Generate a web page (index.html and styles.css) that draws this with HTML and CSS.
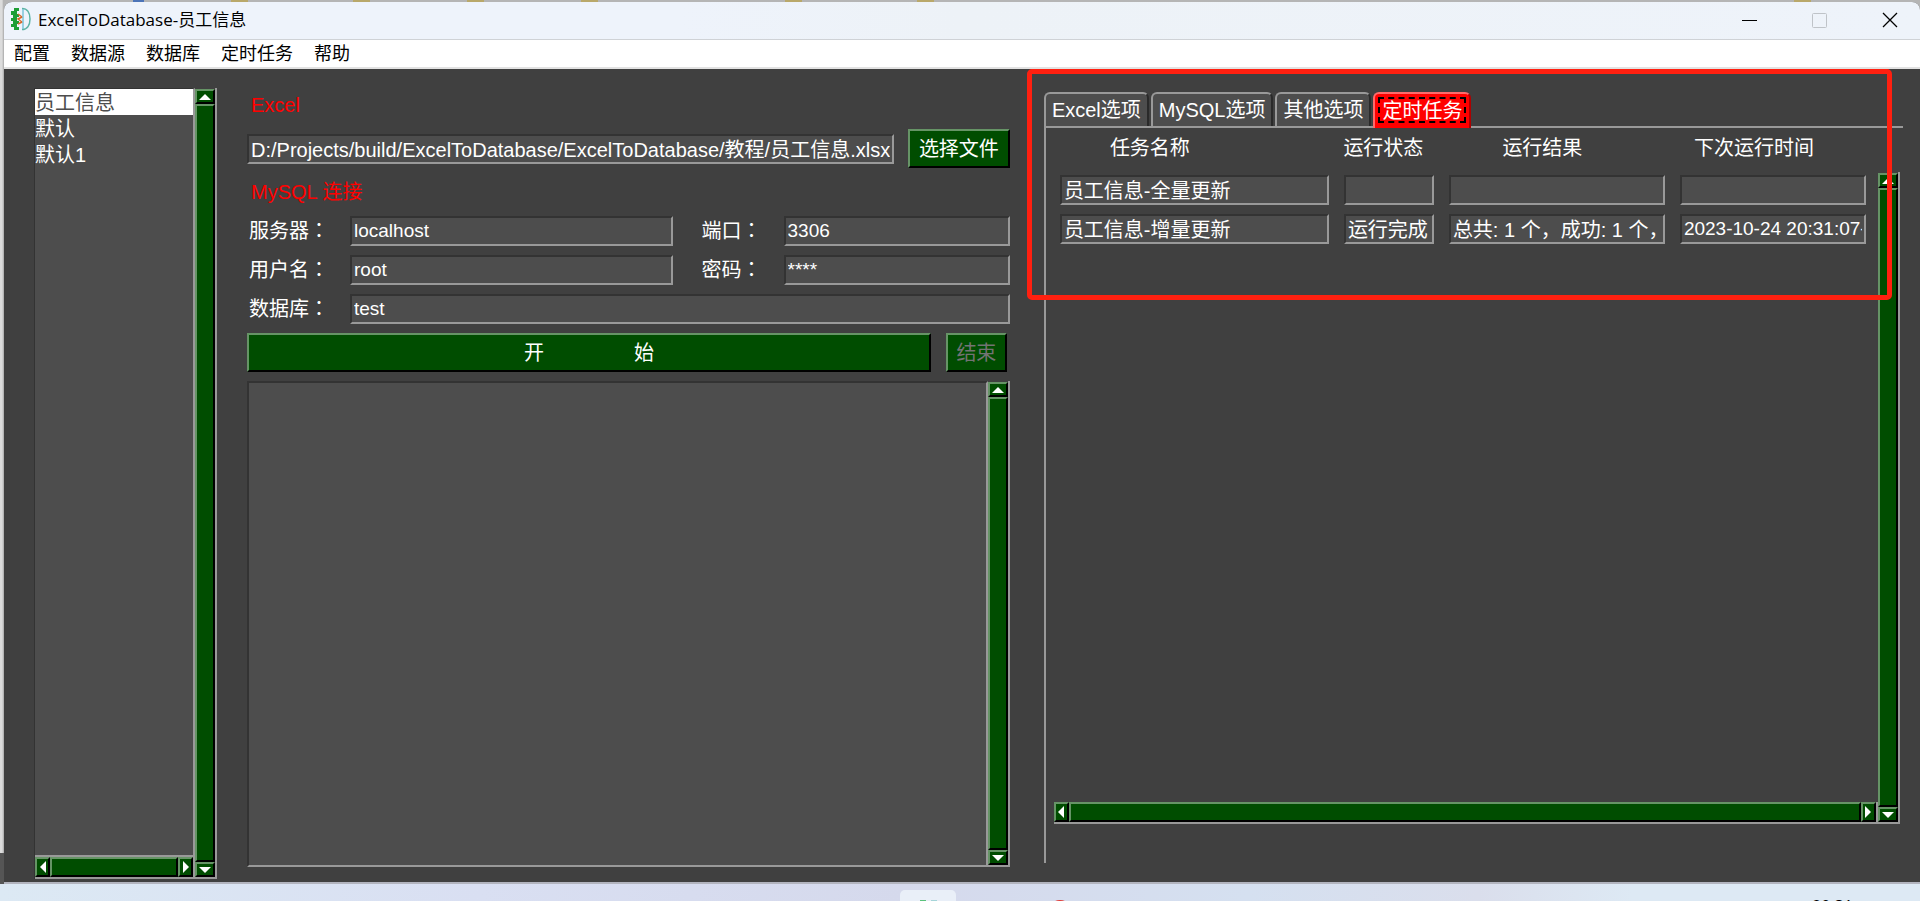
FILE: index.html
```html
<!DOCTYPE html>
<html lang="zh-CN">
<head>
<meta charset="UTF-8">
<meta name="viewport" content="width=device-width, initial-scale=1.0">
<title>ExcelToDatabase-员工信息</title>
<link rel="stylesheet" href="styles.css">
</head>
<body>
<div class="window">
  <header class="titlebar">
    <svg class="logo" width="20" height="24" viewBox="0 0 20 24" fill="none">
      <path d="M3 1h5v3H6v3h2v3H6v4h2v3H6v3h2v3H3v-3H0v-3h2v-3H0v-3h2V8H0V4h3z" fill="#1d9e35"/>
      <path d="M7 7l4 3-4 2 4 3-4 2" stroke="#d9692a" stroke-width="1.500"/>
      <path d="M11 1.500c5 0 8 4 8 10.500s-3 10.500-8 10.500" stroke="#5cb3a4" stroke-width="1.500"/>
      <path d="M12 2v20" stroke="#7cc4d8" stroke-width="1.500"/>
    </svg>
    <h1>ExcelToDatabase-员工信息</h1>
    <div class="window-buttons">
      <button type="button" aria-label="最小化"><svg width="16" height="16" viewBox="0 0 16 16"><path d="M0 8.500h15" stroke="#000"/></svg></button>
      <button type="button" aria-label="最大化" disabled><svg width="16" height="16" viewBox="0 0 16 16"><rect x="0.500" y="1.500" width="14" height="14" rx="1" fill="none" stroke="#bfc3c8"/></svg></button>
      <button type="button" aria-label="关闭"><svg width="16" height="16" viewBox="0 0 16 16"><path d="M1 1l14 14M15 1L1 15" stroke="#000" stroke-width="1.300"/></svg></button>
    </div>
  </header>

  <nav class="menu">
    <a href="#">配置</a>
    <a href="#">数据源</a>
    <a href="#">数据库</a>
    <a href="#">定时任务</a>
    <a href="#">帮助</a>
  </nav>

  <main>
    <section class="configs">
      <select size="10" aria-label="配置">
        <option selected>员工信息</option>
        <option>默认</option>
        <option>默认1</option>
      </select>
      <div class="scroll vertical">
        <button type="button" aria-label="上"><svg width="12" height="6"><path d="M0 6l6-6 6 6z"/></svg></button>
        <div class="thumb"></div>
        <button type="button" aria-label="下"><svg width="12" height="6"><path d="M0 0h12l-6 6z"/></svg></button>
      </div>
      <div class="scroll horizontal">
        <button type="button" aria-label="左"><svg width="6" height="12"><path d="M6 0v12L0 6z"/></svg></button>
        <div class="thumb"></div>
        <button type="button" aria-label="右"><svg width="6" height="12"><path d="M0 0l6 6-6 6z"/></svg></button>
      </div>
    </section>

    <form class="connection">
      <label class="group-title" for="file">Excel</label>
      <div class="file-row">
        <input type="text" id="file" value="D:/Projects/build/ExcelToDatabase/ExcelToDatabase/教程/员工信息.xlsx">
        <button type="button" class="btn">选择文件</button>
      </div>
      <h2 class="group-title">MySQL 连接</h2>
      <div class="fields">
        <label for="host">服务器<span class="colon" lang="zh-TW">：</span></label>
        <input type="text" id="host" value="localhost">
        <label class="second" for="port">端口<span class="colon" lang="zh-TW">：</span></label>
        <input type="text" id="port" value="3306">
        <label for="user">用户名<span class="colon" lang="zh-TW">：</span></label>
        <input type="text" id="user" value="root">
        <label class="second" for="password">密码<span class="colon" lang="zh-TW">：</span></label>
        <input type="text" id="password" value="****">
        <label for="database">数据库<span class="colon" lang="zh-TW">：</span></label>
        <input type="text" id="database" class="wide" value="test">
      </div>
      <div class="run-row">
        <button type="button" class="btn start"><span>开</span><span>始</span></button>
        <button type="button" class="btn stop" disabled>结束</button>
      </div>
      <div class="log">
        <textarea aria-label="日志"></textarea>
        <div class="scroll vertical">
          <button type="button" aria-label="上"><svg width="12" height="6"><path d="M0 6l6-6 6 6z"/></svg></button>
          <div class="thumb"></div>
          <button type="button" aria-label="下"><svg width="12" height="6"><path d="M0 0h12l-6 6z"/></svg></button>
        </div>
      </div>
    </form>

    <section class="options">
      <div class="tabs">
        <button type="button">Excel选项</button>
        <button type="button">MySQL选项</button>
        <button type="button">其他选项</button>
        <button type="button" class="active">定时任务</button>
      </div>
      <div class="panel">
        <table>
          <thead>
            <tr>
              <th class="name">任务名称</th>
              <th class="status">运行状态</th>
              <th class="result">运行结果</th>
              <th class="next">下次运行时间</th>
            </tr>
          </thead>
          <tbody>
            <tr>
              <td><input type="text" aria-label="任务名称" value="员工信息-全量更新"></td>
              <td><input type="text" aria-label="运行状态"></td>
              <td><input type="text" aria-label="运行结果"></td>
              <td><input type="text" class="date" aria-label="下次运行时间"></td>
            </tr>
            <tr>
              <td><input type="text" aria-label="任务名称" value="员工信息-增量更新"></td>
              <td><input type="text" aria-label="运行状态" value="运行完成"></td>
              <td><input type="text" aria-label="运行结果" value="总共: 1 个，成功: 1 个，"></td>
              <td><input type="text" class="date" aria-label="下次运行时间" value="2023-10-24 20:31:07-"></td>
            </tr>
          </tbody>
        </table>
        <div class="scroll vertical">
          <button type="button" aria-label="上"><svg width="12" height="6"><path d="M0 6l6-6 6 6z"/></svg></button>
          <div class="thumb"></div>
          <button type="button" aria-label="下"><svg width="12" height="6"><path d="M0 0h12l-6 6z"/></svg></button>
        </div>
        <div class="scroll horizontal">
          <button type="button" aria-label="左"><svg width="6" height="12"><path d="M6 0v12L0 6z"/></svg></button>
          <div class="thumb"></div>
          <button type="button" aria-label="右"><svg width="6" height="12"><path d="M0 0l6 6-6 6z"/></svg></button>
        </div>
      </div>
      <div class="highlight"></div>
    </section>
  </main>
</div>

<footer class="taskbar">
  <div class="task"><i class="green"></i><i class="teal"></i></div>
  <i class="red-icon"></i>
  <time>20:31</time>
</footer>
</body>
</html>
```
FILE: styles.css
```css
* {
  box-sizing: border-box;
}

body {
  margin: 0;
  height: 100vh;
  display: flex;
  flex-direction: column;
  overflow: hidden;
  padding: 2px 0 0 4px;
  font-family: "Liberation Sans", "Noto Sans CJK SC", sans-serif;
  font-size: 20px;
  color: #fff;
  /* desktop showing around the window */
  background:
    linear-gradient(#b9a86a, #b9a86a) 231px 0 / 17px 2px no-repeat,
    linear-gradient(#b9a86a, #b9a86a) 353px 0 / 17px 2px no-repeat,
    linear-gradient(#b9a86a, #b9a86a) 467px 0 / 17px 2px no-repeat,
    linear-gradient(#b9a86a, #b9a86a) 581px 0 / 17px 2px no-repeat,
    linear-gradient(#b9a86a, #b9a86a) 785px 0 / 17px 2px no-repeat,
    linear-gradient(#b9a86a, #b9a86a) 917px 0 / 17px 2px no-repeat,
    linear-gradient(#b9a86a, #b9a86a) 1794px 0 / 17px 2px no-repeat,
    linear-gradient(#4c74b8, #4c74b8) 133px 0 / 11px 2px no-repeat,
    linear-gradient(#555, #555) 0 853px / 4px 31px no-repeat,
    linear-gradient(90deg, #dcdcdc 2px, #a8a8a8 4px) 0 0 / 4px 100% no-repeat,
    #b5b5b5;
}

button,
input,
select,
textarea {
  font: inherit;
  color: inherit;
  margin: 0;
  padding: 0;
  border: 0;
  border-radius: 0;
  outline: none;
}

.window {
  flex: 1;
  min-height: 0;
  display: flex;
  flex-direction: column;
  background: #404040;
  border-bottom: 2px solid #b2b4be;
  border-radius: 8px 8px 0 0;
  overflow: hidden;
}

/* title bar */
.titlebar {
  display: flex;
  align-items: center;
  height: 38px;
  flex: none;
  padding-left: 7px;
  background: linear-gradient(90deg, #eef3fb 35%, #edf2f7 50%, #eef3fa);
  border-bottom: 1px solid #cfd2d6;
  color: #000;
}

.logo {
  margin-bottom: 4px;
}

.titlebar h1 {
  margin: 0 0 4px 7px;
  flex: 1;
  font-family: "Open Sans", "Noto Sans CJK SC", sans-serif;
  font-size: 17px;
  font-weight: 400;
}

.window-buttons {
  display: flex;
  margin-bottom: 2px;
}

.window-buttons button {
  width: 70px;
  height: 36px;
  display: flex;
  align-items: center;
  justify-content: center;
  background: none;
}

.window-buttons button:last-child {
  width: 60px;
  margin-left: 5px;
}

.menu {
  display: flex;
  align-items: center;
  gap: 21px;
  height: 29px;
  flex: none;
  padding-left: 10px;
  background: #fff;
  border-bottom: 2px solid #e2e2e2;
}

.menu a {
  color: #000;
  font-size: 18px;
  line-height: 26px;
  text-decoration: none;
}

main {
  flex: 1;
  min-height: 0;
  display: grid;
  grid-template-columns: 183px minmax(0, 763fr) minmax(0, 859fr);
  column-gap: 30px;
  padding: 19px 17px 3px 30px;
}

/* sunken text boxes */
input,
textarea {
  width: 100%;
  min-width: 0;
  height: 30px;
  padding: 0 2px;
  background: #4d4d4d;
  border: 2px solid;
  border-color: #333 #999 #999 #333;
}

/* raised green buttons */
.btn,
.scroll button,
.thumb {
  background: #004d00;
  border: 2px solid;
  border-color: #669466 #000 #000 #669466;
}

.btn {
  height: 39px;
  line-height: 32px;
}

/* scroll bars */
.scroll {
  display: flex;
  border: solid #999;
  border-width: 0 2px 2px 0;
}

.scroll.vertical {
  flex-direction: column;
  width: 22px;
  padding-top: 1px;
}

.scroll.horizontal {
  height: 22px;
}

.thumb {
  flex: 1;
}

.scroll button {
  width: 15px;
  flex: none;
  display: flex;
  align-items: center;
  justify-content: center;
}

.scroll.vertical button {
  width: auto;
  height: 15px;
}

.scroll svg {
  fill: #fff;
}

/* saved configurations */
.configs {
  display: grid;
  grid-template-columns: 1fr 22px;
  grid-template-rows: 1fr 22px;
  border-left: 1px solid #333;
}

.configs select {
  width: 100%;
  height: 100%;
  background: #4d4d4d;
  border: solid #999;
  border-width: 0 2px 2px 0;
  border-top: 1px solid #333;
  overflow: hidden;
}

.configs option {
  display: flex;
  align-items: center;
  padding: 0 0 2px;
  height: 26px;
  min-height: 0;
  color: #fff;
}

.configs option:checked {
  background: #fff linear-gradient(#fff, #fff);
  color: #4d4d4d;
  -webkit-text-fill-color: #4d4d4d;
}

.configs .vertical {
  grid-column: 2;
  grid-row: 1 / 3;
}

/* connection form */
.connection {
  display: flex;
  flex-direction: column;
  padding: 0 2px 12px 0;
  min-height: 0;
}

.group-title {
  margin: 0;
  padding-left: 4px;
  height: 35px;
  line-height: 35px;
  font-size: 20px;
  font-weight: 400;
  color: #f00;
}

.file-row {
  display: flex;
  align-items: center;
  gap: 14px;
  padding-top: 6px;
}

.file-row .btn {
  width: 102px;
  flex: none;
}

h2.group-title {
  height: 48px;
  line-height: 48px;
}

.fields {
  display: grid;
  grid-template-columns: 103px 322fr 111px 226fr;
  gap: 9px 0;
  align-items: center;
}

.fields label {
  height: 30px;
  padding-left: 2px;
  line-height: 30px;
}

/* the Taiwan form centres the full-width colon */
.colon {
  font-family: "Noto Sans CJK TC", sans-serif;
  line-height: 20px;
}

.fields .second {
  padding-left: 29px;
}

.fields input,
.date {
  font-size: 19px;
}

.fields .wide {
  grid-column: 2 / 5;
}

.run-row {
  display: flex;
  gap: 15px;
  margin: 9px 3px 9px 0;
}

.start {
  flex: 1;
  display: flex;
  align-items: center;
  justify-content: center;
  gap: 90px;
}

.stop {
  width: 61px;
  color: #737373;
}

.log {
  flex: 1;
  min-height: 0;
  display: flex;
}

.log textarea {
  flex: 1;
  height: 100%;
  resize: none;
}

/* options on the right */
.options {
  position: relative;
  display: flex;
  flex-direction: column;
  padding: 4px 0 16px 2px;
}

.tabs {
  display: flex;
  gap: 2px;
  height: 36px;
  border-bottom: 2px solid #999;
}

.tabs button {
  height: 34px;
  padding: 0 6px;
  line-height: 30px;
  background: #4d4d4d;
  border: 2px solid;
  border-color: #999 #2a2a2a transparent #999;
  border-bottom: 0;
  border-radius: 6px 6px 0 0;
}

.tabs .active {
  height: 36px;
  padding: 0 7px;
  background: #f00;
  border-color: #ff6a6a #b00000 #f00 #ff6a6a;
  outline: 2px dashed #000;
  outline-offset: -7px;
}

.panel {
  flex: 1;
  display: grid;
  grid-template-columns: 1fr 22px;
  grid-template-rows: 44px 1fr 22px;
  padding: 0 3px 39px 8px;
  border-left: 2px solid #999;
}

.panel table {
  grid-column: 1;
  grid-row: 1 / 3;
  align-self: start;
  width: 100%;
  table-layout: fixed;
  border-collapse: collapse;
}

th {
  height: 42px;
  padding: 0 0 6px;
  font-weight: 400;
}

td {
  height: 39px;
  padding: 0 9px 0 6px;
}

td:last-child {
  padding-right: 12px;
}

th.name {
  width: 284px;
  padding-right: 92px;
}

th.status {
  width: 105px;
  padding-right: 14px;
}

th.result {
  width: 231px;
  padding-right: 32px;
}

th.next {
  padding-right: 44px;
}

.panel .vertical {
  grid-column: 2;
  grid-row: 2 / 4;
}

.panel .horizontal {
  grid-column: 1;
  grid-row: 3;
}

/* red frame drawn round the task list */
.highlight {
  position: absolute;
  top: -19px;
  left: -15px;
  right: 11px;
  height: 231px;
  border: 5px solid #ff2010;
  border-radius: 5px;
  pointer-events: none;
}

/* taskbar */
.taskbar {
  height: 17px;
  flex: none;
  margin-left: -4px;
  display: flex;
  align-items: flex-start;
  overflow: hidden;
  padding: 6px 67px 0 900px;
  background: linear-gradient(90deg, #dce9f4, #d9dff2 25%, #d5d9ec 47%, #d5e0f0 65%, #dadeec 77%, #dde9f4 85%);
}

.task {
  width: 56px;
  height: 40px;
  flex: none;
  display: flex;
  justify-content: center;
  gap: 5px;
  padding-top: 10px;
  background: #e9eff8;
  border-radius: 5px;
}

.task i {
  width: 6px;
  height: 10px;
}

.task .green {
  background: #5bc27c;
}

.task .teal {
  background: #a5d5d8;
}

.red-icon {
  width: 24px;
  height: 24px;
  margin: 10px 0 0 92px;
  border-radius: 50%;
  background: #e23b35;
}

.taskbar time {
  margin: 5px 0 0 auto;
  color: #000;
  font-family: "Open Sans", sans-serif;
  font-size: 16px;
  line-height: 22px;
}
```
